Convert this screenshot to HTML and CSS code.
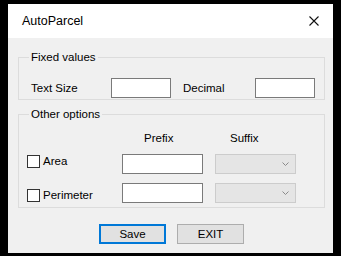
FILE: index.html
```html
<!DOCTYPE html>
<html lang="en">
<head>
    <meta charset="UTF-8">
    <meta name="viewport" content="width=device-width, initial-scale=1.0">
    <title>AutoParcel</title>
    <link rel="stylesheet" href="styles.css">
</head>
<body>
<div class="window">
    <div class="titlebar">
        <span class="title">AutoParcel</span>
        <svg class="close" width="10" height="10" viewBox="0 0 10 10">
            <path d="M0.5 0.5 L9.5 9.5 M9.5 0.5 L0.5 9.5" stroke="#111" stroke-width="1.1" fill="none"/>
        </svg>
    </div>

    <fieldset class="group fixed">
        <legend>Fixed values</legend>
        <div class="fixed-row">
            <label class="lbl-text">Text Size</label>
            <input type="text" class="box">
            <label class="lbl-dec">Decimal</label>
            <input type="text" class="box">
        </div>
    </fieldset>

    <fieldset class="group other">
        <legend>Other options</legend>
        <div class="options">
            <span></span>
            <span class="head prefix">Prefix</span>
            <span class="head suffix">Suffix</span>

            <label class="check top"><span class="cb"></span>Area</label>
            <input type="text" class="box wide">
            <div class="combo">
                <svg width="7" height="4" viewBox="0 0 7 4"><path d="M0.5 0.5 L3.5 3.5 L6.5 0.5" stroke="#8a8a8a" fill="none"/></svg>
            </div>

            <label class="check bottom"><span class="cb"></span>Perimeter</label>
            <input type="text" class="box wide">
            <div class="combo">
                <svg width="7" height="4" viewBox="0 0 7 4"><path d="M0.5 0.5 L3.5 3.5 L6.5 0.5" stroke="#8a8a8a" fill="none"/></svg>
            </div>
        </div>
    </fieldset>

    <div class="buttons">
        <button class="btn default">Save</button>
        <button class="btn">EXIT</button>
    </div>
</div>
</body>
</html>
```

FILE: styles.css
```css
body {
    margin: 0;
    padding: 4px 8px 3px;
    width: 341px;
    height: 256px;
    box-sizing: border-box;
    overflow: hidden;
    background: #000;
    font-family: "Liberation Sans", Arial, sans-serif;
    font-size: 11.5px;
    color: #000;
}
.window {
    width: 325px;
    height: 249px;
    background: #f0f0f0;
    display: flex;
    flex-direction: column;
}
.titlebar {
    height: 34px;
    background: #fff;
    display: flex;
    align-items: center;
    justify-content: space-between;
    padding: 0 14px 0 14px;
    flex-shrink: 0;
}
.title {
    font-size: 12.5px;
}
.close {
    display: block;
}
.group {
    margin: 0 8px 0 10px;
    padding: 0 8px 0 10px;
    border: 1px solid #dcdcdc;
    border-radius: 0;
}
.group legend {
    padding: 0 2px;
    line-height: 14px;
    font-size: 11.5px;
}
.fixed {
    margin-top: 12px;
    padding-top: 14px;
    padding-bottom: 1px;
}
.fixed-row {
    display: flex;
    align-items: center;
    height: 20px;
    margin-left: 2px;
}
.lbl-text {
    width: 80px;
}
.lbl-dec {
    width: 72px;
    margin-left: 12px;
}
.box {
    width: 60px;
    height: 20px;
    box-sizing: border-box;
    border: 1px solid #7a7a7a;
    background: #fff;
    margin: 0;
    padding: 0;
}
.other {
    margin-top: 7px;
    padding-top: 10px;
    padding-bottom: 4px;
}
.options {
    display: grid;
    grid-template-columns: 83px 81px 81px;
    grid-template-rows: 14px 20px 20px;
    column-gap: 12px;
    row-gap: 9px;
    margin-left: -2px;
}
.head {
    line-height: 14px;
}
.prefix {
    padding-left: 22px;
}
.suffix {
    padding-left: 15px;
}
.box.wide {
    width: 81px;
}
.check {
    display: flex;
    align-items: center;
    line-height: 14px;
}
.check.top {
    align-self: start;
}
.check.bottom {
    align-self: end;
    margin-bottom: 1px;
}
.cb {
    width: 13px;
    height: 13px;
    box-sizing: border-box;
    border: 1px solid #333;
    background: #fff;
    margin-right: 3px;
}
.combo {
    height: 20px;
    box-sizing: border-box;
    background: #e5e5e5;
    border: 1px solid #cccccc;
    display: flex;
    align-items: center;
    justify-content: flex-end;
    padding-right: 6px;
}
.combo svg {
    display: block;
}
.buttons {
    display: flex;
    justify-content: center;
    gap: 11px;
    margin-top: 16px;
    padding-left: 2px;
}
.btn {
    width: 67px;
    height: 20px;
    box-sizing: border-box;
    background: #e1e1e1;
    border: 1px solid #adadad;
    font-family: "Liberation Sans", Arial, sans-serif;
    font-size: 11.5px;
    color: #000;
    padding: 0;
}
.btn.default {
    border: 2px solid #0078d7;
}
```
